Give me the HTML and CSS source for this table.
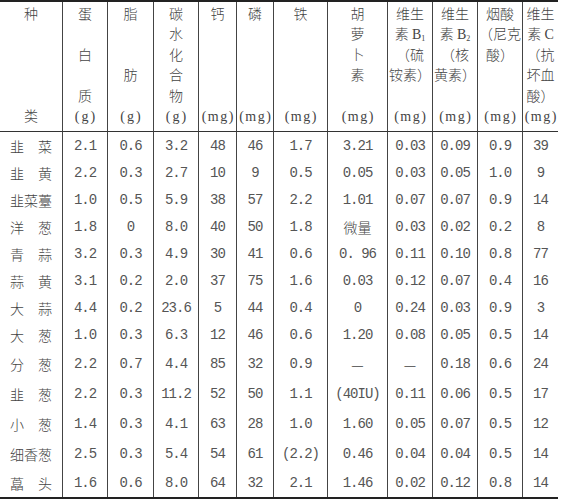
FILE: index.html
```html
<!DOCTYPE html>
<html lang="zh">
<head>
<meta charset="utf-8">
<title>葱蒜类蔬菜营养成分</title>
<link rel="stylesheet" href="styles.css">
</head>
<body>
<table class="tbl">
  <thead>
    <tr>
      <th class="w-kind"><div class="ln">种</div><div class="ln"></div><div class="ln"></div><div class="ln"></div><div class="ln"></div><div class="ln">类</div></th>
      <th class="w-45"><div class="ln">蛋</div><div class="ln"></div><div class="ln">白</div><div class="ln"></div><div class="ln">质</div><div class="ln"><span class="u ug">(g)</span></div></th>
      <th class="w-46"><div class="ln">脂</div><div class="ln"></div><div class="ln"></div><div class="ln">肪</div><div class="ln"></div><div class="ln"><span class="u ug">(g)</span></div></th>
      <th class="w-45"><div class="ln">碳</div><div class="ln">水</div><div class="ln">化</div><div class="ln">合</div><div class="ln">物</div><div class="ln"><span class="u ug">(g)</span></div></th>
      <th class="w-38"><div class="ln">钙</div><div class="ln"></div><div class="ln"></div><div class="ln"></div><div class="ln"></div><div class="ln"><span class="u">(mg)</span></div></th>
      <th class="w-37"><div class="ln">磷</div><div class="ln"></div><div class="ln"></div><div class="ln"></div><div class="ln"></div><div class="ln"><span class="u">(mg)</span></div></th>
      <th class="w-54"><div class="ln">铁</div><div class="ln"></div><div class="ln"></div><div class="ln"></div><div class="ln"></div><div class="ln"><span class="u">(mg)</span></div></th>
      <th class="w-60"><div class="ln">胡</div><div class="ln">萝</div><div class="ln">卜</div><div class="ln">素</div><div class="ln"></div><div class="ln"><span class="u">(mg)</span></div></th>
      <th class="w-45"><div class="ln">维生</div><div class="ln">素 <span class="lat">B<sub>1</sub></span></div><div class="ln">（硫</div><div class="ln">铵素）</div><div class="ln"></div><div class="ln"><span class="u">(mg)</span></div></th>
      <th class="w-45"><div class="ln">维生</div><div class="ln">素 <span class="lat">B<sub>2</sub></span></div><div class="ln">（核</div><div class="ln">黄素）</div><div class="ln"></div><div class="ln"><span class="u">(mg)</span></div></th>
      <th class="w-45"><div class="ln">烟酸</div><div class="ln">（尼克</div><div class="ln">酸）</div><div class="ln"></div><div class="ln"></div><div class="ln"><span class="u">(mg)</span></div></th>
      <th class="w-36"><div class="ln">维生</div><div class="ln">素 <span class="lat">C</span></div><div class="ln">（抗</div><div class="ln">坏血</div><div class="ln">酸）</div><div class="ln"><span class="u">(mg)</span></div></th>
    </tr>
  </thead>
  <tbody class="n">
    <tr class="r27"><td class="nm">韭　菜</td><td>2.1</td><td>0.6</td><td>3.2</td><td>48</td><td>46</td><td>1.7</td><td>3.21</td><td>0.03</td><td>0.09</td><td>0.9</td><td>39</td></tr>
    <tr class="r27"><td class="nm">韭　黄</td><td>2.2</td><td>0.3</td><td>2.7</td><td>10</td><td>9</td><td>0.5</td><td>0.05</td><td>0.03</td><td>0.05</td><td>1.0</td><td>9</td></tr>
    <tr class="r27"><td class="nm">韭菜薹</td><td>1.0</td><td>0.5</td><td>5.9</td><td>38</td><td>57</td><td>2.2</td><td>1.01</td><td>0.07</td><td>0.07</td><td>0.9</td><td>14</td></tr>
    <tr class="r27"><td class="nm">洋　葱</td><td>1.8</td><td>0</td><td>8.0</td><td>40</td><td>50</td><td>1.8</td><td class="nm">微量</td><td>0.03</td><td>0.02</td><td>0.2</td><td>8</td></tr>
    <tr class="r27"><td class="nm">青　蒜</td><td>3.2</td><td>0.3</td><td>4.9</td><td>30</td><td>41</td><td>0.6</td><td>0. 96</td><td>0.11</td><td>0.10</td><td>0.8</td><td>77</td></tr>
    <tr class="r27"><td class="nm">蒜　黄</td><td>3.1</td><td>0.2</td><td>2.0</td><td>37</td><td>75</td><td>1.6</td><td>0.03</td><td>0.12</td><td>0.07</td><td>0.4</td><td>16</td></tr>
    <tr class="r27"><td class="nm">大　蒜</td><td>4.4</td><td>0.2</td><td>23.6</td><td>5</td><td>44</td><td>0.4</td><td>0</td><td>0.24</td><td>0.03</td><td>0.9</td><td>3</td></tr>
    <tr class="r27"><td class="nm">大　葱</td><td>1.0</td><td>0.3</td><td>6.3</td><td>12</td><td>46</td><td>0.6</td><td>1.20</td><td>0.08</td><td>0.05</td><td>0.5</td><td>14</td></tr>
    <tr class="r31"><td class="nm">分　葱</td><td>2.2</td><td>0.7</td><td>4.4</td><td>85</td><td>32</td><td>0.9</td><td class="nm">—</td><td class="nm">—</td><td>0.18</td><td>0.6</td><td>24</td></tr>
    <tr class="r30"><td class="nm">韭　葱</td><td>2.2</td><td>0.3</td><td>11.2</td><td>52</td><td>50</td><td>1.1</td><td>(40IU)</td><td>0.11</td><td>0.06</td><td>0.5</td><td>17</td></tr>
    <tr class="r30"><td class="nm">小　葱</td><td>1.4</td><td>0.3</td><td>4.1</td><td>63</td><td>28</td><td>1.0</td><td>1.60</td><td>0.05</td><td>0.07</td><td>0.5</td><td>12</td></tr>
    <tr class="r30"><td class="nm">细香葱</td><td>2.5</td><td>0.3</td><td>5.4</td><td>54</td><td>61</td><td>(2.2)</td><td>0.46</td><td>0.04</td><td>0.04</td><td>0.5</td><td>14</td></tr>
    <tr class="r28"><td class="nm">藠　头</td><td>1.6</td><td>0.6</td><td>8.0</td><td>64</td><td>32</td><td>2.1</td><td>1.46</td><td>0.02</td><td>0.12</td><td>0.8</td><td>14</td></tr>
  </tbody>
</table>
</body>
</html>
```
FILE: styles.css
```css
* { box-sizing: border-box; }
body {
  margin: 0;
  background: #fff;
  color: #444;
  font-family: "Noto Sans CJK SC", sans-serif;
  font-size: 14px;
  font-weight: 300;
}
.tbl {
  border-collapse: separate;
  border-spacing: 0;
  table-layout: fixed;
  width: 558px;
  border-top: 2px solid #222;
  border-bottom: 2px solid #222;
}
.tbl th, .tbl td {
  padding: 0;
  text-align: center;
  border-left: 1px solid #444;
  font-weight: 300;
  white-space: nowrap;
}
.tbl th:first-child, .tbl td:first-child { border-left: 0; }
.tbl th {
  vertical-align: top;
  height: 130px;
  padding-top: 1px;
  border-bottom: 1px solid #333;
}
.tbl td { vertical-align: middle; }
.w-kind { width: 62px; }
.w-45 { width: 45px; }
.w-46 { width: 46px; }
.w-38 { width: 38px; }
.w-37 { width: 37px; }
.w-54 { width: 54px; }
.w-60 { width: 60px; }
.w-36 { width: 36px; }
.ln {
  height: 20.4px;
  line-height: 20.4px;
  white-space: nowrap;
  text-spacing-trim: space-all;
}
.u {
  font-family: "Liberation Serif", serif;
  font-weight: 400;
  font-size: 14px;
  letter-spacing: 1.5px;
  margin-left: 1.5px;
}
.ug { letter-spacing: 2px; margin-left: 2px; }
.lat { font-family: "Liberation Serif", serif; font-weight: 400; font-size: 14px; }
.lat sub { font-size: 8px; vertical-align: -2px; line-height: 0; }
.n td {
  font-family: "Liberation Mono", monospace;
  font-weight: 400;
  font-size: 14px;
  letter-spacing: -1px;
  color: #555;
}
.n td.nm {
  font-family: "Noto Sans CJK SC", sans-serif;
  font-weight: 300;
  letter-spacing: 0;
  color: #444;
}
.r27 td { height: 27px; }
.r28 td { height: 28px; }
.r30 td { height: 30px; }
.r31 td { height: 31px; }
```
